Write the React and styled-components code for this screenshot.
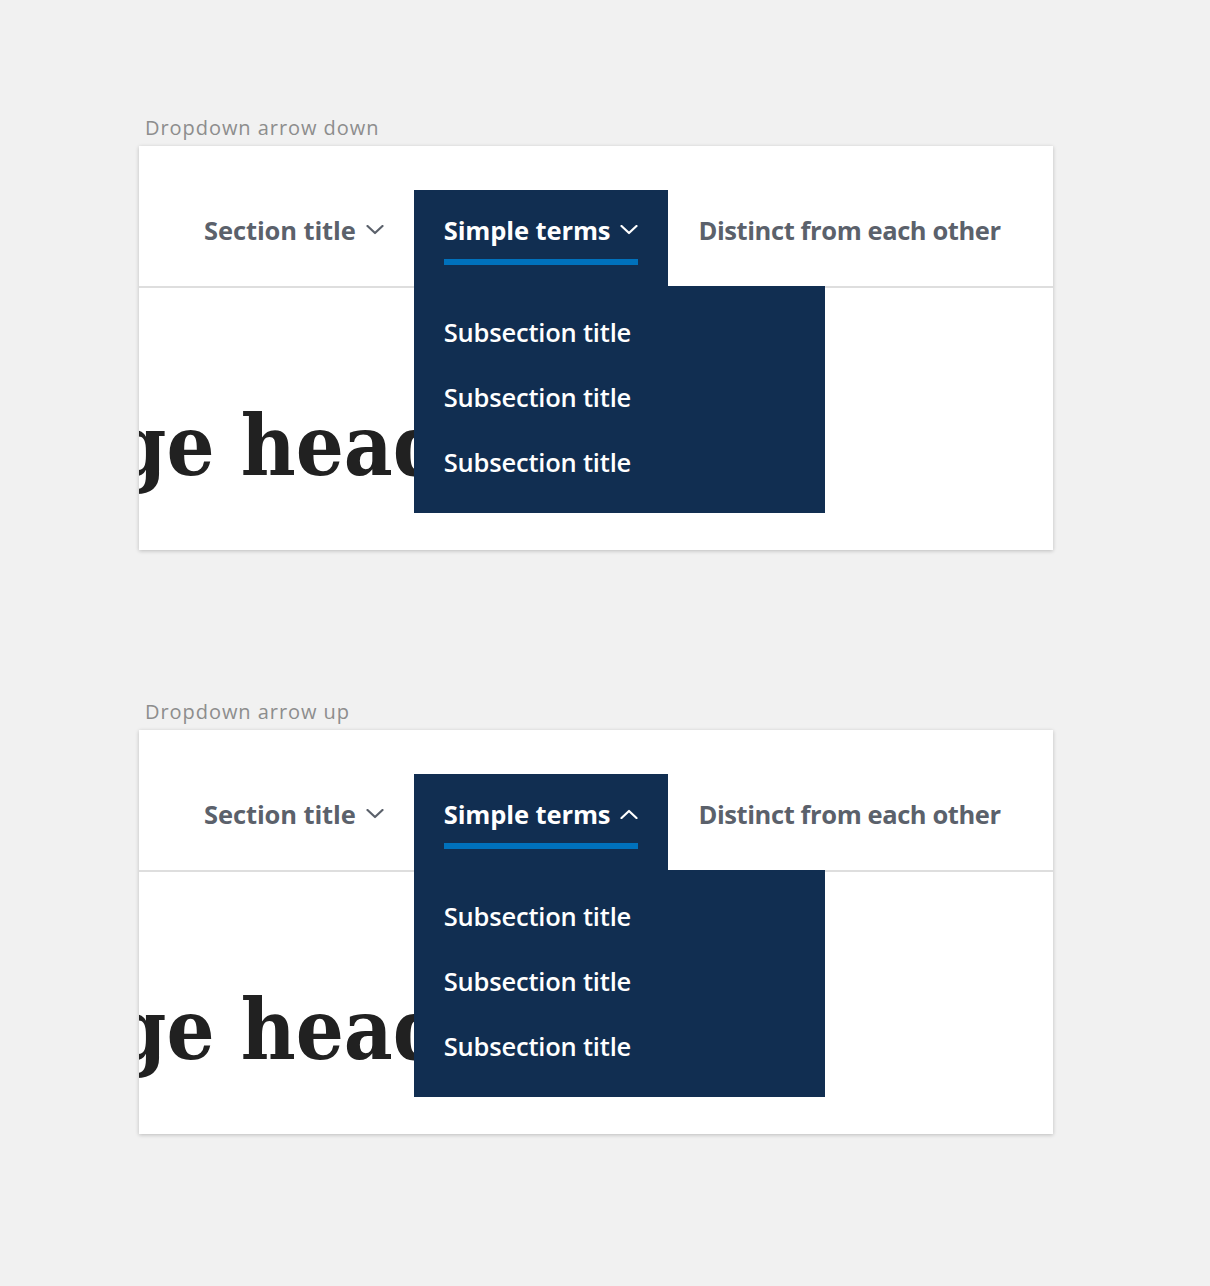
import React from "react";
import styled, { createGlobalStyle } from "styled-components";

const GlobalStyle = createGlobalStyle`
  html, body {
    margin: 0;
    padding: 0;
    background: #f1f1f1;
  }
  body {
    font-family: "Open Sans", "Noto Sans", sans-serif;
  }
`;

const Page = styled.div`
  display: flex;
  flex-direction: column;
  gap: 150px;
  padding: 116px 0 150px 139px;
  min-height: 1286px;
  box-sizing: border-box;
`;

const Example = styled.section`
  display: flex;
  flex-direction: column;
  gap: 6px;
  width: 914px;
`;

const Caption = styled.div`
  font-family: "Open Sans", "Noto Sans", sans-serif;
  font-size: 20px;
  line-height: 24px;
  color: #8d8d8d;
  padding-left: 6px;
  letter-spacing: 0.95px;
`;

const Card = styled.div`
  position: relative;
  height: 404px;
  background: #fff;
  box-shadow: 0 1px 4px rgba(0, 0, 0, 0.22);
  overflow: hidden;
  display: flex;
  flex-direction: column;
`;

const Nav = styled.nav`
  display: flex;
  align-items: flex-end;
  height: 140px;
  padding-left: 35px;
  border-bottom: 2px solid #dedede;
  flex-shrink: 0;
`;

const Tab = styled.div`
  position: relative;
  display: flex;
  align-items: flex-start;
  padding: 25px 30px 21px;
  background: ${(p) => (p.$active ? "#112e51" : "transparent")};
  color: ${(p) => (p.$active ? "#ffffff" : "#5b616b")};
`;

const Label = styled.span`
  display: inline-flex;
  align-items: center;
  gap: 10px;
  font-size: 25.5px;
  font-weight: 700;
  line-height: 30px;
  letter-spacing: ${(p) => (p.$tight ? "-0.4px" : "-0.1px")};
  padding-bottom: 14px;
  border-bottom: 6px solid ${(p) => (p.$active ? "#0071bc" : "transparent")};
  white-space: nowrap;
`;

const Menu = styled.ul`
  position: absolute;
  top: 100%;
  left: 0;
  z-index: 2;
  width: 411px;
  margin: 0;
  padding: 13px 0 19px;
  list-style: none;
  background: #112e51;
`;

const MenuItem = styled.li`
  padding: 0 30px;
  height: 65px;
  display: flex;
  align-items: center;
  font-size: 25.5px;
  font-weight: 600;
  letter-spacing: -0.2px;
  color: #ffffff;
  white-space: nowrap;
`;

const Heading = styled.h1`
  margin: 0;
  margin-left: -129px;
  margin-top: 116px;
  font-family: "DejaVu Serif Condensed", "DejaVu Serif", serif;
  font-stretch: condensed;
  font-weight: 700;
  font-size: 84px;
  line-height: 1;
  color: #212121;
  white-space: nowrap;
`;

const Chevron = ({ up }) => (
  <svg width="18" height="10" viewBox="0 0 18 10" aria-hidden="true">
    <polyline
      points={up ? "1.5,9 9,2 16.5,9" : "1.5,1 9,8 16.5,1"}
      fill="none"
      stroke="currentColor"
      strokeWidth="2.2"
      strokeLinecap="round"
      strokeLinejoin="round"
    />
  </svg>
);

const subsections = ["Subsection title", "Subsection title", "Subsection title"];

const DropdownNav = ({ caption, up }) => (
  <Example>
    <Caption>{caption}</Caption>
    <Card>
      <Nav>
        <Tab>
          <Label>
            Section title
            <Chevron />
          </Label>
        </Tab>
        <Tab $active>
          <Label $active>
            Simple terms
            <Chevron up={up} />
          </Label>
          <Menu>
            {subsections.map((s, i) => (
              <MenuItem key={i}>{s}</MenuItem>
            ))}
          </Menu>
        </Tab>
        <Tab>
          <Label $tight>Distinct from each other</Label>
        </Tab>
      </Nav>
      <Heading>Page heading</Heading>
    </Card>
  </Example>
);

export default function App() {
  return (
    <>
      <GlobalStyle />
      <Page>
        <DropdownNav caption="Dropdown arrow down" />
        <DropdownNav caption="Dropdown arrow up" up />
      </Page>
    </>
  );
}
